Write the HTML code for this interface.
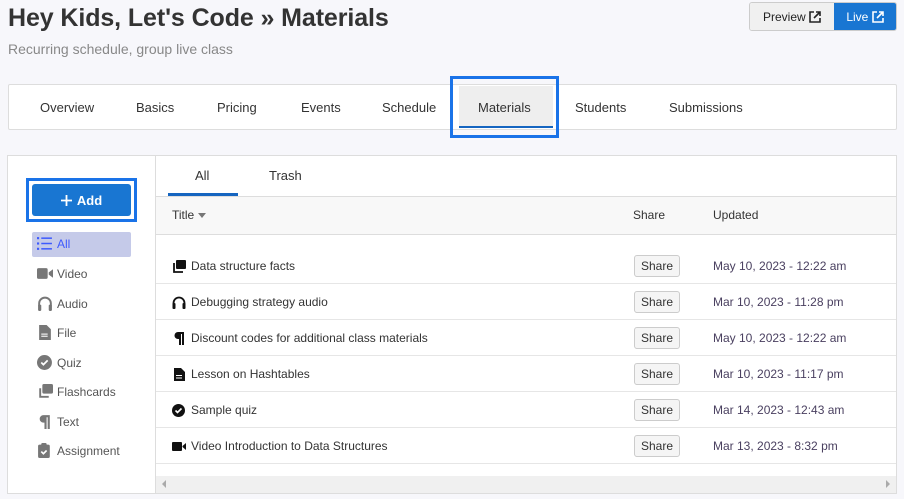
<!DOCTYPE html>
<html><head><meta charset="utf-8"><style>
*{box-sizing:border-box;margin:0;padding:0}
body{width:904px;height:499px;background:#f7f7fb;font-family:"Liberation Sans",Arial,sans-serif;position:relative;overflow:hidden;color:#333}
.a{position:absolute}
h1{position:absolute;left:8px;top:4px;font-size:25px;font-weight:bold;color:#333;letter-spacing:-0.1px;white-space:nowrap}
.sub{left:8px;top:41px;font-size:14px;color:#888}
.tab{position:absolute;top:100px;font-size:13px;color:#333}
.side{position:absolute;left:37px;font-size:12px;color:#555;display:flex;align-items:center}
.side svg{width:16px;height:15px;margin-right:4px;fill:#777}
.row{position:absolute;left:156px;width:740px;height:36px;border-bottom:1px solid #e6e6e6}
.row .t{position:absolute;left:16px;top:11px;font-size:12px;color:#333;display:flex;align-items:center}
.row .t svg{width:14px;height:13px;margin-right:5px;fill:#111}
.row .b{position:absolute;left:478px;top:7px;width:46px;height:22px;border:1px solid #ccc;border-radius:3px;background:#f5f5f5;font-size:12px;text-align:center;line-height:20px;color:#333}
.row .d{position:absolute;left:557px;top:11px;font-size:12px;color:#4a4060}
</style></head><body>
<h1>Hey Kids, Let's Code » Materials</h1>
<div class="a sub">Recurring schedule, group live class</div>

<div class="a" style="left:749px;top:2px;width:148px;height:29px;border:1px solid #ccc;border-radius:3px;overflow:hidden;display:flex;font-size:12px">
 <div style="width:84px;background:#f0f0f0;color:#222;display:flex;align-items:center;justify-content:center">Preview&nbsp;<svg width="12" height="12" viewBox="0 0 12 12"><path d="M5 1H1v10h10V7" fill="none" stroke="#222" stroke-width="1.6"/><path d="M7 1h4v4M11 1L5 7" fill="none" stroke="#222" stroke-width="1.6"/></svg></div>
 <div style="flex:1;background:#1976d2;color:#fff;display:flex;align-items:center;justify-content:center">Live&nbsp;<svg width="12" height="12" viewBox="0 0 12 12"><path d="M5 1H1v10h10V7" fill="none" stroke="#fff" stroke-width="1.6"/><path d="M7 1h4v4M11 1L5 7" fill="none" stroke="#fff" stroke-width="1.6"/></svg></div>
</div>

<div class="a" style="left:8px;top:84px;width:889px;height:46px;background:#fff;border:1px solid #ddd;border-radius:2px"></div>
<div class="a" style="left:459px;top:86px;width:94px;height:42px;background:#eee"></div>
<div class="a" style="left:459px;top:126px;width:94px;height:2px;background:#1565c0"></div>
<div class="a" style="left:450px;top:76px;width:109px;height:62px;border:3px solid #1a73e8"></div>
<div class="tab" style="left:40px">Overview</div>
<div class="tab" style="left:136px">Basics</div>
<div class="tab" style="left:217px">Pricing</div>
<div class="tab" style="left:301px">Events</div>
<div class="tab" style="left:382px">Schedule</div>
<div class="tab" style="left:478px">Materials</div>
<div class="tab" style="left:575px">Students</div>
<div class="tab" style="left:669px">Submissions</div>

<div class="a" style="left:7px;top:155px;width:890px;height:339px;background:#fff;border:1px solid #ddd"></div>
<div class="a" style="left:155px;top:156px;width:1px;height:337px;background:#ddd"></div>

<div class="a" style="left:26px;top:178px;width:111px;height:44px;border:3px solid #1a73e8"></div>
<div class="a" style="left:32px;top:184px;width:99px;height:32px;background:#1976d2;border-radius:3px;color:#fff;font-size:13px;font-weight:bold;display:flex;align-items:center;justify-content:center"><svg width="11" height="11" viewBox="0 0 11 11" style="margin-right:5px"><path d="M5.5 0v11M0 5.5h11" stroke="#fff" stroke-width="1.8"/></svg>Add</div>

<div class="a" style="left:32px;top:232px;width:99px;height:25px;background:#c5cae9;border-radius:2px"></div>
<div class="side" style="top:236px;color:#3d5afe;font-size:12px"><svg viewBox="0 0 15 14" style="fill:#3d5afe"><rect x="0" y="1" width="2" height="2"/><rect x="0" y="6" width="2" height="2"/><rect x="0" y="11" width="2" height="2"/><rect x="4" y="1.3" width="10" height="1.4"/><rect x="4" y="6.3" width="10" height="1.4"/><rect x="4" y="11.3" width="10" height="1.4"/></svg>All</div>
<div class="side" style="top:266px"><svg viewBox="0 0 15 14"><rect x="0" y="2" width="10" height="10" rx="1.5"/><path d="M11 6l4-3v8l-4-3z"/></svg>Video</div>
<div class="side" style="top:296px"><svg viewBox="0 0 15 14"><path d="M2 9V7a5.5 5.5 0 0 1 11 0v2" fill="none" stroke="#777" stroke-width="1.8"/><rect x="1" y="8" width="3" height="6" rx="1"/><rect x="11" y="8" width="3" height="6" rx="1"/></svg>Audio</div>
<div class="side" style="top:325px"><svg viewBox="0 0 15 14"><path d="M2 0h7l4 4v10H2z"/><rect x="4" y="8" width="6" height="1" fill="#fff"/><rect x="4" y="10" width="6" height="1" fill="#fff"/></svg>File</div>
<div class="side" style="top:355px"><svg viewBox="0 0 15 14"><circle cx="7" cy="7" r="7"/><path d="M4 7l2 2 4-4" stroke="#fff" stroke-width="1.6" fill="none"/></svg>Quiz</div>
<div class="side" style="top:384px"><svg viewBox="0 0 15 14"><rect x="5" y="0" width="10" height="9" rx="1.5"/><path d="M3 4v8h8" fill="none" stroke="#777" stroke-width="1.8"/></svg>Flashcards</div>
<div class="side" style="top:414px"><svg viewBox="0 0 15 14"><path d="M6 1a3.5 3.5 0 0 0 0 7h1v6h2V3h1v11h2V1z"/></svg>Text</div>
<div class="side" style="top:443px"><svg viewBox="0 0 15 14"><rect x="1" y="1.5" width="11" height="12.5" rx="1.5"/><rect x="4" y="0" width="5" height="3" rx="1"/><path d="M4 8l2 2 3-3" stroke="#fff" stroke-width="1.5" fill="none"/></svg>Assignment</div>

<div class="a" style="left:195px;top:168px;font-size:13px;color:#333">All</div>
<div class="a" style="left:269px;top:168px;font-size:13px;color:#333">Trash</div>
<div class="a" style="left:156px;top:196px;width:740px;height:1px;background:#ddd"></div>
<div class="a" style="left:168px;top:193px;width:70px;height:3px;background:#1565c0"></div>
<div class="a" style="left:156px;top:197px;width:740px;height:38px;background:#f8f8f8;border-bottom:1px solid #ddd"></div>
<div class="a" style="left:172px;top:208px;font-size:12px;color:#333">Title <svg width="8" height="5" viewBox="0 0 8 5" style="vertical-align:middle"><path d="M0 0h8L4 5z" fill="#777"/></svg></div>
<div class="a" style="left:633px;top:208px;font-size:12px;color:#333">Share</div>
<div class="a" style="left:713px;top:208px;font-size:12px;color:#333">Updated</div>

<div class="row" style="top:248px"><div class="t"><svg viewBox="0 0 14 13"><rect x="4" y="0" width="10" height="9" rx="1"/><path d="M2 3v9h9" fill="none" stroke="#111" stroke-width="1.8"/></svg>Data structure facts</div><div class="b">Share</div><div class="d">May 10, 2023 - 12:22 am</div></div>
<div class="row" style="top:284px"><div class="t"><svg viewBox="0 0 14 13"><path d="M1.5 9V7a5.5 5.5 0 0 1 11 0v2" fill="none" stroke="#111" stroke-width="1.8"/><rect x="0.5" y="7" width="3" height="6" rx="1"/><rect x="10.5" y="7" width="3" height="6" rx="1"/></svg>Debugging strategy audio</div><div class="b">Share</div><div class="d">Mar 10, 2023 - 11:28 pm</div></div>
<div class="row" style="top:320px"><div class="t"><svg viewBox="0 0 14 13"><path d="M6 0a3.5 3.5 0 0 0 0 7h1v6h2V2h1v11h2V0z"/></svg>Discount codes for additional class materials</div><div class="b">Share</div><div class="d">May 10, 2023 - 12:22 am</div></div>
<div class="row" style="top:356px"><div class="t"><svg viewBox="0 0 14 13"><path d="M2 0h7l4 4v9H2z"/><rect x="4" y="7" width="6" height="1" fill="#fff"/><rect x="4" y="9.5" width="6" height="1" fill="#fff"/></svg>Lesson on Hashtables</div><div class="b">Share</div><div class="d">Mar 10, 2023 - 11:17 pm</div></div>
<div class="row" style="top:392px"><div class="t"><svg viewBox="0 0 14 13"><circle cx="6.5" cy="6.5" r="6.5"/><path d="M3.5 6.5l2 2 4-4" stroke="#fff" stroke-width="1.6" fill="none"/></svg>Sample quiz</div><div class="b">Share</div><div class="d">Mar 14, 2023 - 12:43 am</div></div>
<div class="row" style="top:428px"><div class="t"><svg viewBox="0 0 14 13"><rect x="0" y="2" width="10" height="9" rx="1"/><path d="M10.5 6l3.5-3v7l-3.5-3z"/></svg>Video Introduction to Data Structures</div><div class="b">Share</div><div class="d">Mar 13, 2023 - 8:32 pm</div></div>

<div class="a" style="left:156px;top:476px;width:740px;height:17px;background:#f0f0f0"></div>
<div class="a" style="left:162px;top:480px;width:0;height:0;border-top:4px solid transparent;border-bottom:4px solid transparent;border-right:4px solid #aaa"></div>
<div class="a" style="left:886px;top:480px;width:0;height:0;border-top:4px solid transparent;border-bottom:4px solid transparent;border-left:4px solid #aaa"></div>
</body></html>
